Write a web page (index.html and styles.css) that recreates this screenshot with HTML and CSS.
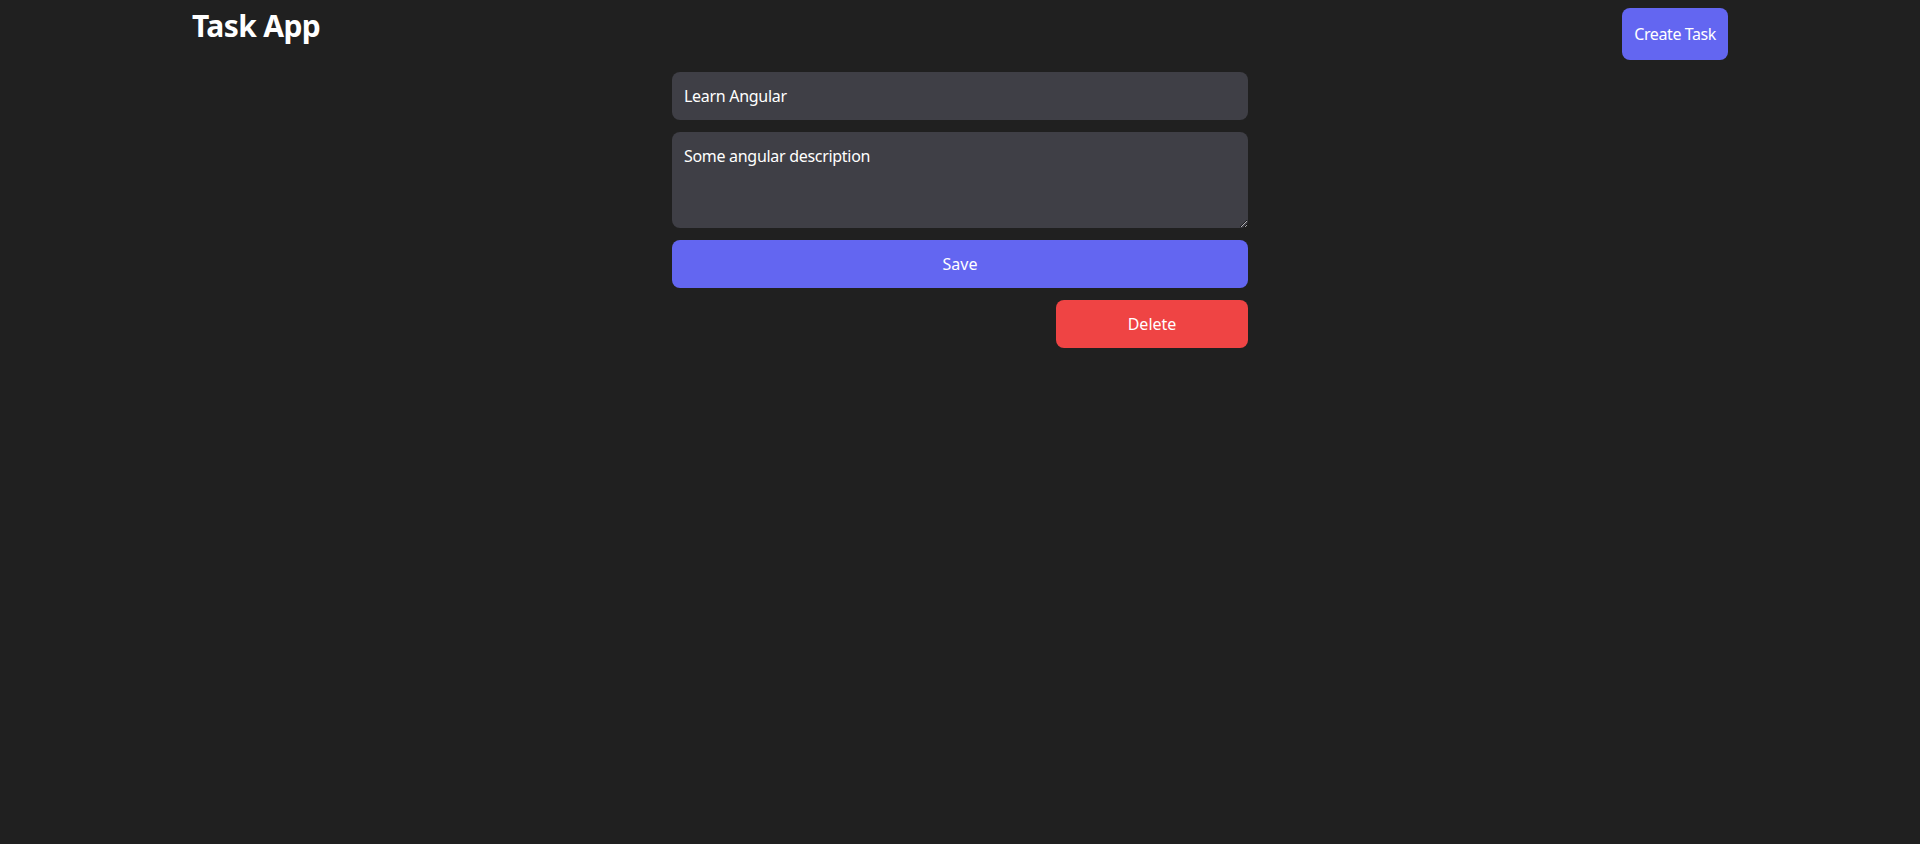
FILE: index.html
```html
<!DOCTYPE html>
<html lang="en">
<head>
  <meta charset="UTF-8">
  <meta name="viewport" content="width=device-width, initial-scale=1.0">
  <title>Task App</title>
  <link rel="stylesheet" href="styles.css">
</head>
<body>
  <header class="header">
    <h1 class="logo">Task App</h1>
    <button class="btn btn-primary create-btn">Create Task</button>
  </header>

  <main class="task-form">
    <input type="text" class="field" value="Learn Angular">
    <textarea class="field" rows="3">Some angular description</textarea>
    <button class="btn btn-primary btn-block">Save</button>
    <div class="actions">
      <button class="btn btn-danger delete-btn">Delete</button>
    </div>
  </main>
</body>
</html>
```

FILE: styles.css
```css
body {
  margin: 0;
  background: #202020;
  color: #fff;
  font-family: "Segoe UI", "Noto Sans", sans-serif;
  font-size: 16px;
}
.header {
  max-width: 1536px;
  margin: 0 auto;
  padding: 8px 0;
  display: flex;
  justify-content: space-between;
  align-items: flex-start;
}
.logo {
  margin: 0;
  font-size: 30px;
  line-height: 36px;
  font-weight: 700;
  letter-spacing: -0.6px;
}
.btn {
  border: none;
  border-radius: 8px;
  color: #fff;
  font-family: inherit;
  font-size: 16px;
  line-height: 24px;
  padding: 12px 16px;
  cursor: pointer;
}
.btn-primary {
  background: #6366f1;
}
.btn-danger {
  background: #ef4444;
}
.create-btn {
  padding: 14px 12px;
  letter-spacing: -0.4px;
}
.task-form {
  max-width: 576px;
  margin: 4px auto 0;
  display: flex;
  flex-direction: column;
  gap: 12px;
}
.field {
  display: block;
  background: #3f3f46;
  color: #fff;
  border: none;
  border-radius: 8px;
  padding: 12px;
  font-family: inherit;
  font-size: 16px;
  line-height: 24px;
  letter-spacing: -0.3px;
  outline: none;
}
textarea.field {
  height: 96px;
  box-sizing: border-box;
}
.btn-block {
  width: 100%;
}
.actions {
  display: flex;
  justify-content: flex-end;
}
.delete-btn {
  width: 192px;
}
```
